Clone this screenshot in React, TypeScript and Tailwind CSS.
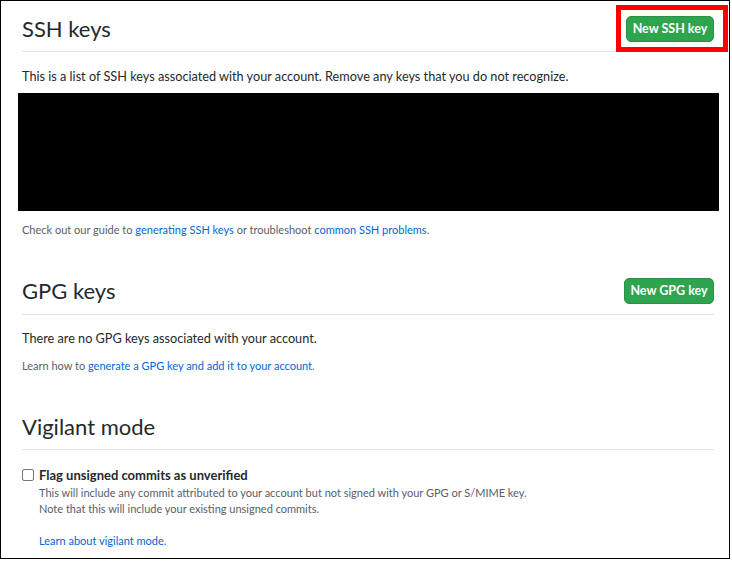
import React from "react";

const font = { fontFamily: "Lato, 'Noto Sans', sans-serif" };

function GreenButton({ label, width }: { label: string; width: string }) {
  return (
    <button
      className={`h-[26px] ${width} rounded-[5px] bg-[#2ea44f] border border-[#2a9147] text-white text-[12.5px] font-bold`}
    >
      {label}
    </button>
  );
}

export default function App() {
  return (
    <div className="bg-white w-[732px] h-[561px]" style={font}>
      <div className="relative w-[730px] h-[559px] border border-black pl-[21px] pr-[15px] text-[#24292e] overflow-hidden">
        {/* SSH keys */}
        <div className="flex items-center justify-between border-b border-[#e1e4e8] pt-[13px] pb-[7px]">
          <h2 className="text-[22px] leading-[30px] font-normal">SSH keys</h2>
          <GreenButton label="New SSH key" width="w-[88px]" />
        </div>
        <p className="text-[12.7px] leading-[18px] mt-[15px]">
          This is a list of SSH keys associated with your account. Remove any keys that you do not recognize.
        </p>
        <div className="bg-black h-[118px] mt-[8px] ml-[-4px] mr-[-5px]" />
        <p className="text-[11px] leading-[16px] mt-[11px] text-[#586069]">
          Check out our guide to <span className="text-[#0366d6]">generating SSH keys</span> or troubleshoot{" "}
          <span className="text-[#0366d6]">common SSH problems</span>.
        </p>

        {/* GPG keys */}
        <div className="flex items-center justify-between border-b border-[#e1e4e8] mt-[38px] pb-[8px]">
          <h2 className="text-[22px] leading-[30px] font-normal">GPG keys</h2>
          <GreenButton label="New GPG key" width="w-[90px]" />
        </div>
        <p className="text-[12.7px] leading-[18px] mt-[14px]">There are no GPG keys associated with your account.</p>
        <p className="text-[11px] leading-[16px] mt-[11px] text-[#586069]">
          Learn how to <span className="text-[#0366d6]">generate a GPG key and add it to your account</span>.
        </p>

        {/* Vigilant mode */}
        <div className="border-b border-[#e1e4e8] mt-[38px] pb-[7px]">
          <h2 className="text-[22px] leading-[30px] font-normal">Vigilant mode</h2>
        </div>
        <div className="mt-[16px] flex gap-[5px]">
          <div className="pt-[3px]">
            <div className="w-[12px] h-[12px] border border-[#767676] rounded-[2px] bg-white" />
          </div>
          <div>
            <div className="text-[13px] leading-[18px] font-bold">Flag unsigned commits as unverified</div>
            <div className="text-[11px] leading-[16px] text-[#586069] mt-[1px]">
              This will include any commit attributed to your account but not signed with your GPG or S/MIME key.
            </div>
            <div className="text-[11px] leading-[16px] text-[#586069]">
              Note that this will include your existing unsigned commits.
            </div>
            <div className="text-[11px] leading-[16px] text-[#0366d6] mt-[16px]">Learn about vigilant mode.</div>
          </div>
        </div>

        {/* annotation around the SSH button */}
        <div className="absolute left-[615px] top-[4px] w-[112px] h-[47px] border-[5px] border-[#ff0000]" />
      </div>
    </div>
  );
}
